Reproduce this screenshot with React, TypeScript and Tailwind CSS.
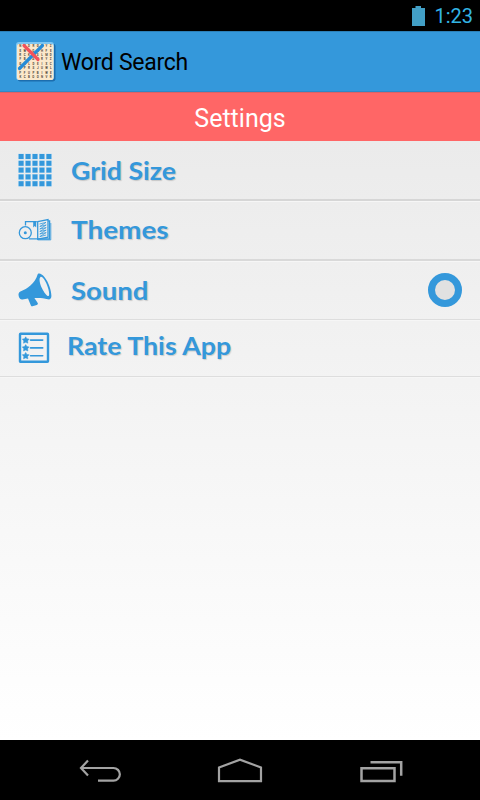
import type { ReactNode } from 'react'

const BLUE = '#3498db'

const LETTERS = ['NRDRGPYZ', 'EWXOAHFE', 'RCKTSLMD', 'FBUANRYZ', 'GOLDEIXC', 'EPRSJUWL', 'PFUPBIWE', 'KCBOONVR']

function AppIcon() {
  return (
    <svg width="42" height="42" viewBox="0 0 42 42">
      <rect x="2.5" y="2.5" width="38" height="38" rx="3" fill="#1c6dae" />
      <rect x="1" y="1" width="38" height="38" rx="3" fill="#7cc6f2" />
      <rect x="2" y="3" width="36.5" height="36" rx="2" fill="#fbe8cb" />
      {LETTERS.map((row, y) =>
        row.split('').map((letter, x) => (
          <text key={`${x}-${y}`} x={5.3 + x * 4.35} y={6.4 + y * 4.35} fontSize="2.9" fontWeight="700" fontFamily="Roboto, sans-serif" textAnchor="middle" fill="#4d4437">
            {letter}
          </text>
        )),
      )}
      <path d="M4.5 27.5 27.5 4.5" stroke="#258bd7" strokeWidth="3.2" strokeLinecap="round" />
      <path d="M9 4.5 23 18.5" stroke="#f4525a" strokeWidth="3.2" strokeLinecap="round" />
    </svg>
  )
}

function GridIcon() {
  return (
    <svg width="36" height="36" viewBox="0 0 36 36">
      {[0, 1, 2, 3, 4].map((y) =>
        [0, 1, 2, 3, 4].map((x) => (
          <rect key={`${x}-${y}`} x={1.6 + x * 6.95} y={2 + y * 6.8} width="5" height="5" fill={BLUE} stroke="#c3e1f5" strokeWidth="0.8" paintOrder="stroke" />
        )),
      )}
    </svg>
  )
}

function ThemesIcon() {
  return (
    <svg width="36" height="36" viewBox="0 0 36 36" fill="none" stroke={BLUE} strokeWidth="1.3">
      <circle cx="8.3" cy="20.7" r="6" />
      <circle cx="8.3" cy="20.7" r="1.5" fill={BLUE} stroke="none" />
      <path d="M8.5 13.5V9.6H19.8M12 26.9H21" />
      <path d="M16.2 9.6H19.2V15.4L17.7 14L16.2 15.4Z" fill={BLUE} stroke="none" />
      <path d="M20.7 9.7 31 7.5V25.2L20.7 27.2Z" />
      <path d="M31.2 9H32.6V27H20.7" />
      <path d="M33.8 11V27.9H20.7" strokeWidth="0.8" />
      <path d="M22.5 12 29 10.4 22.8 14.5 29.2 13 22.8 17 29.2 15.6 22.8 19.5 29.2 18.1 22.8 22 29.2 20.6 22.8 24.6 29.2 23" strokeWidth="0.8" />
    </svg>
  )
}

function MegaphoneIcon() {
  return (
    <svg width="36" height="36" viewBox="0 0 36 36">
      <path
        fill={BLUE}
        fillRule="evenodd"
        d="M20.8 2C22.2.8 24.8 1.8 27.6 5.2C31.4 9.8 34.4 18.3 34.4 24C34.4 26.8 32.8 27.7 30.8 27.3C26.3 26.1 22.3 25.7 17.4 26.1L20.7 31C21.2 32 20.8 32.5 19.8 32.9L15.5 34.3C14.8 34.5 14.2 34.2 13.9 33.5L11 26.5L5.5 27.4C3.8 27.7 2.4 26.5 1.8 24.5C1.1 22.1 1.6 20.4 3.4 19.5C10.5 16.5 17.9 11.9 20.8 2ZM23.5 5C21.6 6.5 22.8 11.8 25.1 16.5C27.2 20.8 30.3 24.6 31.6 24C33 23.3 31.7 16.7 29.5 11.8C27.5 7.4 25 4 23.5 5Z"
      />
    </svg>
  )
}

function RateIcon() {
  return (
    <svg width="36" height="36" viewBox="0 0 36 36">
      <rect x="3" y="3.8" width="28" height="28" rx="0.6" fill="none" stroke={BLUE} strokeWidth="2.4" />
      {[10.1, 17.9, 25.7].map((y) => (
        <g key={y} transform={`translate(8.7 ${y})`}>
          <path d="M0-3.3 1.2-1.3 3.4-1 1.9.8 2.2 3.1 0 2.2-2.2 3.1-1.9.8-3.4-1-1.2-1.3Z" fill={BLUE} stroke={BLUE} strokeWidth="0.5" strokeLinejoin="round" />
          <path d="M4.8 0H17" stroke={BLUE} strokeWidth="1.6" strokeLinecap="round" />
        </g>
      ))}
    </svg>
  )
}

function Row({ icon, label, className, labelClass, children }: { icon: ReactNode; label: string; className: string; labelClass: string; children?: ReactNode }) {
  return (
    <div className={`flex items-center pl-[17px] pr-[18px] shadow-[0_1px_0_#f6f6f6] ${className}`}>
      {icon}
      <span className={`origin-left text-[25px] font-bold whitespace-nowrap leading-none text-[#3498db] [text-shadow:1px_1px_1px_rgba(0,0,0,0.16)] font-[Lato,sans-serif] ${labelClass}`}>{label}</span>
      {children}
    </div>
  )
}

export default function App() {
  return (
    <div className="flex h-[800px] w-[480px] flex-col overflow-hidden bg-black font-[Roboto,sans-serif]">
      <div className="flex h-[31px] shrink-0 items-center justify-end gap-[9px] pr-[7px] text-[#33b5e5]">
        <svg width="13" height="20" viewBox="0 0 13 20">
          <path d="M0 2H3.5V0H9V2H13V20H0Z" fill="#429fc6" />
        </svg>
        <span className="text-[20px] leading-none">1:23</span>
      </div>

      <header className="flex h-[61px] shrink-0 items-center border-t border-[#2c80b8] bg-[#3498db] pl-[15px] shadow-[inset_0_-1px_0_#3189c5]">
        <AppIcon />
        <h1 className="ml-[4px] pt-px text-[23px] tracking-[-0.3px] leading-none text-black">Word Search</h1>
      </header>

      <div className="flex h-[49px] shrink-0 items-center justify-center border-t border-[#dd6266] bg-[#ff6666] pt-[2px] text-[25px] leading-none text-white">
        <span>Settings</span>
      </div>

      <main className="flex-1 bg-linear-to-b from-[#ebebeb] to-white">
        <Row icon={<GridIcon />} label="Grid Size" className="h-[60px] border-b-2 border-[#d6d6d6]" labelClass="ml-[18px] scale-x-[1.065]" />
        <Row icon={<ThemesIcon />} label="Themes" className="h-[60px] border-b-2 border-[#d9d9d9]" labelClass="ml-[18px] pb-[2px] scale-x-[1.115]" />
        <Row icon={<MegaphoneIcon />} label="Sound" className="h-[59px] border-b border-[#dddddd]" labelClass="ml-[18px] scale-x-[1.1]">
          <button aria-label="Sound" className="ml-auto size-[34px] rounded-full border-[7px] border-[#3498db] bg-[#e1e1e1]" />
        </Row>
        <Row icon={<RateIcon />} label="Rate This App" className="h-[57px] border-b border-[#dddddd]" labelClass="ml-[14px] pb-[5px] scale-x-[1.07]" />
      </main>

      <nav className="flex h-[60px] shrink-0 items-center justify-between bg-black pr-[76px] pl-[78px]">
        <svg width="44" height="30" viewBox="0 0 44 30" fill="none" stroke="#a3a3a3" strokeWidth="2.2">
          <path d="M10 5.5 3 13 10 20.5M3 13H35.5A6.3 6.3 0 0 1 35.5 25.7H20" />
        </svg>
        <svg width="48" height="30" viewBox="0 0 48 30" fill="none" stroke="#a3a3a3" strokeWidth="2.2">
          <path d="M2 12.5 23 4.7 44 12.5V26.2H2Z" />
        </svg>
        <svg width="44" height="30" viewBox="0 0 44 30" fill="none" stroke="#a3a3a3" strokeWidth="2.5">
          <path d="M1.5 13.3H34.5V26H1.5ZM10.5 7.2H41.2V20.8" />
        </svg>
      </nav>
    </div>
  )
}
